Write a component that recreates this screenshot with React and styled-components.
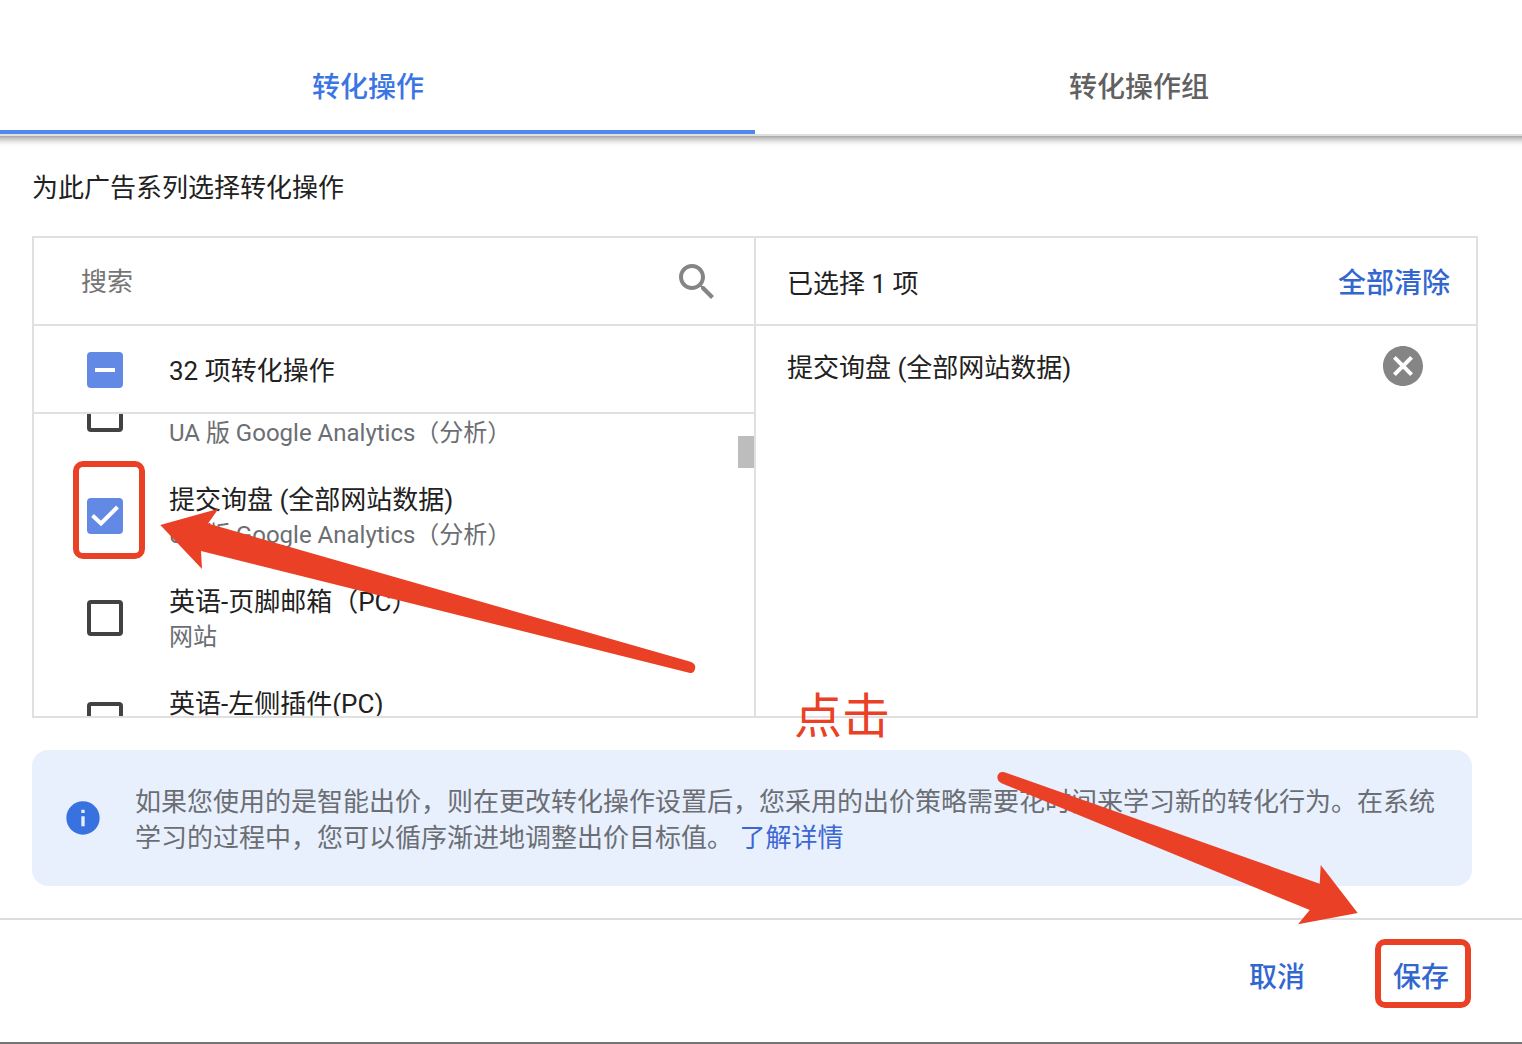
import React, { useEffect, useRef, useState } from "react";
import styled, { createGlobalStyle } from "styled-components";

const GlobalStyle = createGlobalStyle`
  *, *::before, *::after { box-sizing: border-box; }
  body {
    margin: 0;
    background: #fff;
    color: #212121;
    font-family: Roboto, "Noto Sans CJK SC", sans-serif;
    font-size: 26px;
    line-height: 36px;
  }
  button, input { font: inherit; color: inherit; }
`;

const Dialog = styled.div`
  position: relative;
  overflow: hidden;
  border-bottom: 2px solid #757575;
`;

const Header = styled.header`
  margin: 0 -16px;
  border-bottom: 2px solid #e0e0e0;
  box-shadow: 0 2px 8px rgba(0, 0, 0, 0.5);
`;

const TabList = styled.div`
  display: flex;
  margin-right: 12px;
`;

const Tab = styled.button`
  flex: 1;
  height: 134px;
  padding: 46px 3px 0 0;
  border: 0;
  border-bottom: 4px solid ${(p) => (p.$active ? "#5186ec" : "transparent")};
  background: none;
  color: ${(p) => (p.$active ? "#3b75e3" : "#616161")};
  font-size: 28px;
  font-weight: 500;
`;

const Content = styled.main`
  padding: 34px 44px 32px 32px;
`;

const Title = styled.h1`
  margin: 0 0 30px;
  font-size: 26px;
  font-weight: 400;
  line-height: 36px;
`;

const Picker = styled.section`
  display: grid;
  grid-template-columns: 1fr 1fr;
  border: 2px solid #e0e0e0;
`;

const Column = styled.div`
  min-width: 0;

  & + & {
    margin-left: -1px;
    border-left: 2px solid #e0e0e0;
  }
`;

const Bar = styled.div`
  display: flex;
  align-items: center;
  justify-content: space-between;
  height: 88px;
  padding: ${(p) => p.$top}px ${(p) => p.$right}px 0 ${(p) => p.$left}px;
  border-bottom: 2px solid #e0e0e0;
`;

const SearchInput = styled.input`
  flex: 1;
  min-width: 0;
  height: 48px;
  padding: 0;
  border: 0;
  outline: 0;
  background: none;

  &::placeholder {
    color: #757575;
    opacity: 1;
  }
`;

const Icon = styled.svg`
  display: block;
  flex: none;
  width: ${(p) => p.$size}px;
  height: ${(p) => p.$size}px;
  fill: ${(p) => p.$color};
`;

const Option = styled.label`
  display: flex;
  align-items: center;
  gap: 46px;
  height: ${(p) => (p.$compact ? 88 : 102)}px;
  padding: ${(p) => (p.$compact ? 2 : 0)}px 0 0 53px;
  border-bottom: ${(p) => (p.$compact ? "2px solid #e0e0e0" : "0")};
`;

const Box = styled.span`
  display: grid;
  flex: none;
  width: 36px;
  height: 36px;

  & > * {
    grid-area: 1 / 1;
  }
`;

const BoxInput = styled.input`
  appearance: none;
  width: 36px;
  height: 36px;
  margin: 0;
  border: 4px solid #424242;
  border-radius: 4px;

  &:checked,
  &:indeterminate {
    border-color: #628ae4;
    background: #628ae4;
  }
`;

const Mark = styled.svg`
  width: 36px;
  height: 36px;
  fill: none;
  stroke: #fff;
  stroke-width: 4;
  pointer-events: none;
`;

const OptionText = styled.span`
  display: flex;
  flex-direction: column;
  padding-top: 3px;
  line-height: 35px;
`;

const OptionName = styled.span`
  min-height: 35px;
`;

const OptionSource = styled.span`
  min-height: 35px;
  color: #6b6e73;
  font-size: 24px;
`;

const ListFrame = styled.div`
  position: relative;
  height: 302px;
  overflow: hidden;
`;

const ListItems = styled.div`
  margin-top: -51px;
`;

const Thumb = styled.div`
  position: absolute;
  top: 22px;
  right: 1px;
  width: 16px;
  height: 32px;
  background: #bdbdbd;
`;

const TextButton = styled.button`
  padding: 0;
  border: 0;
  background: none;
  color: #3367d0;
  font-size: 28px;
  font-weight: 500;
`;

const SelectedItem = styled.div`
  display: flex;
  align-items: center;
  justify-content: space-between;
  height: 80px;
  padding: 0 49px 0 31px;
`;

const SelectedName = styled.span`
  padding-top: 3px;
`;

const IconButton = styled.button`
  padding: 0;
  border: 0;
  background: none;
`;

const Notice = styled.aside`
  display: flex;
  align-items: center;
  gap: 32px;
  margin: 32px 6px 0 0;
  padding: 30px 32px 30px 31px;
  border-radius: 16px;
  background: #e8f0fe;
  color: #6b6e73;
`;

const NoticeText = styled.p`
  margin: 0;
  padding-top: 4px;
`;

const Link = styled.a`
  color: #3c67d2;
  text-decoration: none;
`;

const Footer = styled.footer`
  display: flex;
  align-items: center;
  justify-content: flex-end;
  gap: 88px;
  height: 124px;
  padding: 0 73px 6px 0;
  border-top: 2px solid #dadce0;
`;

const Overlay = styled.div`
  position: absolute;
  inset: 0;
  pointer-events: none;
`;

const Highlight = styled.div`
  position: absolute;
  left: ${(p) => p.$x}px;
  top: ${(p) => p.$y}px;
  width: ${(p) => p.$w}px;
  height: ${(p) => p.$h}px;
  border: 6px solid #ea4126;
  border-radius: 10px;
`;

const Arrows = styled.svg`
  position: absolute;
  left: 0;
  top: 0;
  width: 1522px;
  height: 1044px;
  fill: #ea4126;
`;

const Callout = styled.span`
  position: absolute;
  left: 794px;
  top: 681px;
  color: #ea4126;
  font-size: 48px;
  line-height: 72px;
`;

const OPTIONS = [
  { id: "previous", source: "UA 版 Google Analytics（分析）" },
  { id: "inquiry", name: "提交询盘 (全部网站数据)", source: "UA 版 Google Analytics（分析）" },
  { id: "footer-mail", name: "英语-页脚邮箱（PC）", source: "网站" },
  { id: "left-plugin", name: "英语-左侧插件(PC)" },
];

function Checkbox({ checked, mixed, onChange }) {
  const ref = useRef(null);
  useEffect(() => {
    ref.current.indeterminate = Boolean(mixed);
  }, [mixed]);
  return (
    <Box>
      <BoxInput ref={ref} type="checkbox" checked={checked} onChange={onChange} />
      {mixed && (
        <Mark viewBox="0 0 36 36" aria-hidden="true">
          <path d="M8 18h20" />
        </Mark>
      )}
      {checked && (
        <Mark viewBox="0 0 36 36" aria-hidden="true">
          <path d="M5.5 17.5L14 25.5L30.5 9" />
        </Mark>
      )}
    </Box>
  );
}

export default function App() {
  const [tab, setTab] = useState(0);
  const [query, setQuery] = useState("");
  const [selected, setSelected] = useState(["inquiry"]);
  const toggle = (id) =>
    setSelected((s) => (s.includes(id) ? s.filter((x) => x !== id) : [...s, id]));

  return (
    <>
      <GlobalStyle />
      <Dialog>
        <Header>
          <TabList role="tablist">
            {["转化操作", "转化操作组"].map((name, i) => (
              <Tab
                key={name}
                type="button"
                role="tab"
                aria-selected={tab === i}
                $active={tab === i}
                onClick={() => setTab(i)}
              >
                {name}
              </Tab>
            ))}
          </TabList>
        </Header>

        <Content>
          <Title>为此广告系列选择转化操作</Title>
          <Picker>
            <Column>
              <Bar $top={2} $left={47} $right={34}>
                <SearchInput
                  type="text"
                  placeholder="搜索"
                  aria-label="搜索"
                  value={query}
                  onChange={(e) => setQuery(e.target.value)}
                />
                <Icon $size={48} $color="#858585" viewBox="0 0 24 24" aria-hidden="true">
                  <path d="M15.5 14h-.79l-.28-.27C15.41 12.59 16 11.11 16 9.5 16 5.91 13.09 3 9.5 3S3 5.91 3 9.5 5.91 16 9.5 16c1.61 0 3.09-.59 4.23-1.57l.27.28v.79l5 4.99L20.49 19l-4.99-5zm-6 0C7.01 14 5 11.99 5 9.5S7.01 5 9.5 5 14 7.01 14 9.5 11.99 14 9.5 14z" />
                </Icon>
              </Bar>
              <Option $compact>
                <Checkbox checked={false} mixed={selected.length > 0} onChange={() => setSelected([])} />
                <OptionText>32 项转化操作</OptionText>
              </Option>
              <ListFrame>
                <ListItems>
                  {OPTIONS.map((o) => (
                    <Option key={o.id}>
                      <Checkbox checked={selected.includes(o.id)} onChange={() => toggle(o.id)} />
                      <OptionText>
                        <OptionName>{o.name}</OptionName>
                        <OptionSource>{o.source}</OptionSource>
                      </OptionText>
                    </Option>
                  ))}
                </ListItems>
                <Thumb />
              </ListFrame>
            </Column>

            <Column>
              <Bar $top={5} $left={31} $right={26}>
                <span>已选择 {selected.length} 项</span>
                <TextButton type="button" onClick={() => setSelected([])}>
                  全部清除
                </TextButton>
              </Bar>
              {OPTIONS.filter((o) => selected.includes(o.id)).map((o) => (
                <SelectedItem key={o.id}>
                  <SelectedName>{o.name}</SelectedName>
                  <IconButton type="button" aria-label="清除" onClick={() => toggle(o.id)}>
                    <Icon $size={48} $color="#858585" viewBox="0 0 24 24" aria-hidden="true">
                      <path d="M12 2C6.47 2 2 6.47 2 12s4.47 10 10 10 10-4.47 10-10S17.53 2 12 2zm5 13.59L15.59 17 12 13.41 8.41 17 7 15.59 10.59 12 7 8.41 8.41 7 12 10.59 15.59 7 17 8.41 13.41 12 17 15.59z" />
                    </Icon>
                  </IconButton>
                </SelectedItem>
              ))}
            </Column>
          </Picker>

          <Notice>
            <Icon $size={40} $color="#3871e0" viewBox="0 0 24 24" aria-hidden="true">
              <path d="M12 2C6.48 2 2 6.48 2 12s4.48 10 10 10 10-4.48 10-10S17.52 2 12 2zm1 15h-2v-6h2v6zm0-8h-2V7h2v2z" />
            </Icon>
            <NoticeText>
              如果您使用的是智能出价，则在更改转化操作设置后，您采用的出价策略需要花时间来学习新的转化行为。在系统学习的过程中，您可以循序渐进地调整出价目标值。{" "}
              <Link href="#details">了解详情</Link>
            </NoticeText>
          </Notice>
        </Content>

        <Footer>
          <TextButton type="button">取消</TextButton>
          <TextButton type="button">保存</TextButton>
        </Footer>

        <Overlay>
          <Highlight $x={73} $y={461} $w={72} $h={98} />
          <Highlight $x={1375} $y={939} $w={96} $h={69} />
          <Arrows viewBox="0 0 1522 1044" aria-hidden="true">
            <path d="M160.3 525L218.5 508.7L208 523.5L690.5 661.8Q695.5 663.5 695.3 667.5Q694.5 673.5 690 673L201 551L202 569Z" />
            <path d="M1357.7 913L1320.7 865L1319.7 883.7L1004.5 772.3Q999.5 771 997.6 775.5Q996.5 780.5 1001.5 783.3L1309.7 910L1298 924.3Z" />
          </Arrows>
          <Callout>点击</Callout>
        </Overlay>
      </Dialog>
    </>
  );
}
